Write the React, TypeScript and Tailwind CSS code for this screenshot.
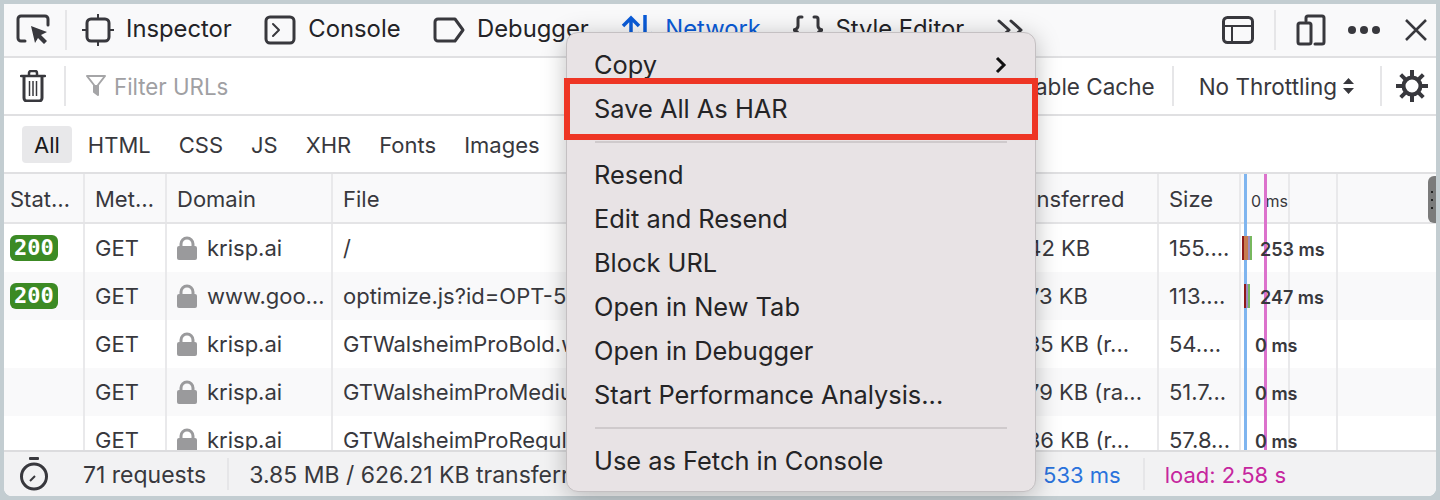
import React from "react";

const Tool = ({ icon, label, active }: { icon: React.ReactNode; label: string; active?: boolean }) => (
  <div className={`flex items-center gap-3 ${active ? "text-[#0a5bd8]" : "text-[#232327]"}`}>
    {icon}
    <span className="pb-0.5">{label}</span>
  </div>
);

const Sep = ({ className }: { className: string }) => <div className={`w-0.5 bg-[#e6e6e8] shrink-0 ${className}`} />;

const stroke = { fill: "none", stroke: "currentColor", strokeWidth: 3, strokeLinecap: "round" as const, strokeLinejoin: "round" as const };

const PickIcon = () => (
  <svg width="34" height="32" viewBox="0 0 34 32" className="text-[#38383d]">
    <path d="M9 27H5a3 3 0 0 1-3-3V5a3 3 0 0 1 3-3h24a3 3 0 0 1 3 3v6" {...stroke} />
    <path d="M15 12l16 6-6 3 6 6-3 3-6-6-3 5z" fill="currentColor" />
  </svg>
);
const InspectorIcon = () => (
  <svg width="32" height="32" viewBox="0 0 32 32" className="text-[#38383d]">
    <rect x="5" y="5" width="22" height="22" rx="4" {...stroke} />
    <path d="M16 0v5M16 27v5M0 16h5M27 16h5" fill="none" stroke="currentColor" strokeWidth="2" />
  </svg>
);
const ConsoleIcon = () => (
  <svg width="32" height="30" viewBox="0 0 32 30" className="text-[#38383d]">
    <rect x="2" y="2" width="28" height="26" rx="4" {...stroke} />
    <path d="M9 9l6 6-6 6" {...stroke} strokeWidth="2" />
  </svg>
);
const DebuggerIcon = () => (
  <svg width="32" height="26" viewBox="0 0 32 26" className="text-[#38383d]">
    <path d="M5 2h17l8 11-8 11H5a3 3 0 0 1-3-3V5a3 3 0 0 1 3-3z" {...stroke} />
  </svg>
);
const NetworkIcon = () => (
  <svg width="32" height="30" viewBox="0 0 32 30">
    <path d="M10 28V3M2 11l8-8 8 8" fill="none" stroke="currentColor" strokeWidth="3.5" />
    <path d="M24 0v26M16 18l8 8 8-8" fill="none" stroke="currentColor" strokeWidth="3.5" />
  </svg>
);
const BracesIcon = () => (
  <svg width="30" height="30" viewBox="0 0 30 30" className="text-[#38383d]">
    <path d="M9 2H7a2 2 0 0 0-2 2v7c0 2-1 3-4 4 3 1 4 2 4 4v7a2 2 0 0 0 2 2h2M21 2h2a2 2 0 0 1 2 2v7c0 2 1 3 4 4-3 1-4 2-4 4v7a2 2 0 0 1-2 2h-2" {...stroke} />
  </svg>
);

const TrashIcon = () => (
  <svg width="26" height="32" viewBox="0 0 26 32" className="text-[#38383d]">
    <path d="M1 6h24M9 5V3a2 2 0 0 1 2-2h4a2 2 0 0 1 2 2v2" {...stroke} strokeWidth="2.5" />
    <path d="M4 7v21a3 3 0 0 0 3 3h12a3 3 0 0 0 3-3V7" {...stroke} />
    <path d="M9.5 11v15M13 11v15M16.5 11v15" fill="none" stroke="currentColor" strokeWidth="1.5" />
  </svg>
);
const GearIcon = () => (
  <svg width="32" height="32" viewBox="0 0 32 32" className="text-[#38383d]">
    <circle cx="16" cy="16" r="8.5" fill="none" stroke="currentColor" strokeWidth="4" />
    <path d="M16 0v6M16 26v6M0 16h6M26 16h6M4.7 4.7l4.5 4.5M22.8 22.8l4.5 4.5M27.3 4.7l-4.5 4.5M9.2 22.8l-4.5 4.5" fill="none" stroke="currentColor" strokeWidth="4" />
  </svg>
);
const LockIcon = () => (
  <svg width="20" height="24" viewBox="0 0 20 24" className="text-[#9a9a9c] shrink-0">
    <path d="M4 11V8a6 6 0 0 1 12 0v3" fill="none" stroke="currentColor" strokeWidth="3" />
    <rect x="0" y="10" width="20" height="14" rx="2" fill="currentColor" />
  </svg>
);

const rows = [
  { status: true, domain: "krisp.ai", file: "/", transferred: "11.42 KB", size: "155....", time: "253 ms" },
  { status: true, domain: "www.goo…", file: "optimize.js?id=OPT-5", transferred: "11.73 KB", size: "113....", time: "247 ms" },
  { status: false, domain: "krisp.ai", file: "GTWalsheimProBold.woff2", transferred: "11.35 KB (r...", size: "54....", time: "0 ms" },
  { status: false, domain: "krisp.ai", file: "GTWalsheimProMedium.woff2", transferred: "11.79 KB (ra...", size: "51.7...", time: "0 ms" },
  { status: false, domain: "krisp.ai", file: "GTWalsheimProRegular.woff2", transferred: "11.86 KB (r...", size: "57.8...", time: "0 ms" },
];

const cols = "grid grid-cols-[81px_82px_166px_660px_166px_82px_49px_48px_1fr]";
const cell = "border-r-2 border-[#e9e9eb] flex items-center overflow-hidden whitespace-nowrap";
const padded = `${cell} pl-[10px]`;

const menuItem = "h-11 flex items-center justify-between pl-[27px] pr-7";

export default function App() {
  return (
    <div className="relative w-[1440px] h-[500px] bg-[#c3cdd1] p-1 overflow-hidden font-['Inter',sans-serif] text-[#38383d] text-[22px]">
      <div className="flex flex-col h-full bg-white rounded-b-lg overflow-hidden">
        {/* tabs */}
        <div className="h-[54px] shrink-0 flex items-center bg-[#f9f9fa] border-b-2 border-[#e0e0e2] pl-3 pr-2 text-[23.8px]">
          <PickIcon />
          <Sep className="h-10 ml-[15px] mr-[15px]" />
          <div className="flex items-center gap-[32.5px]">
            <Tool icon={<InspectorIcon />} label="Inspector" />
            <Tool icon={<ConsoleIcon />} label="Console" />
            <Tool icon={<DebuggerIcon />} label="Debugger" />
            <Tool icon={<NetworkIcon />} label="Network" active />
            <Tool icon={<BracesIcon />} label="Style Editor" />
            <svg width="26" height="22" viewBox="0 0 26 22" className="text-[#38383d]">
              <path d="M2 2l10 9-10 9M14 2l10 9-10 9" {...stroke} />
            </svg>
          </div>
          <div className="ml-auto flex items-center">
            <svg width="32" height="28" viewBox="0 0 32 28" className="text-[#38383d]">
              <rect x="1.5" y="1.5" width="29" height="25" rx="4" {...stroke} />
              <path d="M2 10h28M10 10v17" fill="none" stroke="currentColor" strokeWidth="2" />
            </svg>
            <Sep className="h-10 ml-5 mr-5" />
            <svg width="30" height="32" viewBox="0 0 30 32" className="text-[#38383d]">
              <path d="M10 7V4a2 2 0 0 1 2-2h14a2 2 0 0 1 2 2v24a2 2 0 0 1-2 2h-7" {...stroke} />
              <rect x="2" y="9" width="13" height="21" rx="2" {...stroke} />
            </svg>
            <div className="flex gap-1 ml-[22px]">
              <div className="w-2 h-2 rounded-full bg-[#38383d]" />
              <div className="w-2 h-2 rounded-full bg-[#38383d]" />
              <div className="w-2 h-2 rounded-full bg-[#38383d]" />
            </div>
            <svg width="24" height="24" viewBox="0 0 24 24" className="text-[#38383d] ml-6">
              <path d="M2 2l20 20M22 2L2 22" fill="none" stroke="currentColor" strokeWidth="2.5" />
            </svg>
          </div>
        </div>

        {/* filter bar */}
        <div className="h-[58px] shrink-0 flex items-center border-b-2 border-[#e0e0e2] pl-4 pr-2">
          <TrashIcon />
          <Sep className="h-10 ml-[18px] mr-5" />
          <svg width="20" height="24" viewBox="0 0 20 24" className="text-[#a5a5a7]">
            <path d="M1 2h18l-7 9v10l-4-3v-7z" fill="none" stroke="currentColor" strokeWidth="2" strokeLinejoin="round" />
            <path d="M8 11h4v10l-4-3z" fill="currentColor" />
          </svg>
          <span className="ml-2 text-[#a0a0a3] text-[22.3px] pt-0.5">Filter URLs</span>
          <div className="ml-auto flex items-center text-[22.5px]">
            <span className="pt-0.5">Disable Cache</span>
            <Sep className="h-10 ml-[17px] mr-[25px]" />
            <span className="pt-0.5">No Throttling</span>
            <svg width="11" height="18" viewBox="0 0 11 18" className="ml-1.5">
              <path d="M5.5 1L11 7H0zM5.5 17L0 11h11z" fill="currentColor" />
            </svg>
            <Sep className="h-10 ml-[26px] mr-3.5" />
            <GearIcon />
          </div>
        </div>

        {/* type filters */}
        <div className="h-[58px] shrink-0 flex items-center gap-[28px] border-b-2 border-[#e0e0e2] pl-[18px]">
          <span className="bg-[#e8e8ea] rounded px-3 pt-[3px] pb-px text-[#18181a] -mr-3">All</span>
          <span className="pt-0.5">HTML</span>
          <span className="pt-0.5">CSS</span>
          <span className="pt-0.5">JS</span>
          <span className="pt-0.5">XHR</span>
          <span className="pt-0.5">Fonts</span>
          <span className="pt-0.5">Images</span>
        </div>

        {/* table */}
        <div className="relative flex-1 min-h-0 overflow-hidden">
          <div className={`${cols} h-[50px] bg-[#f9f9fa] border-b-2 border-[#e4e4e6]`}>
            <div className={`${cell} pl-[6px] pt-[3px]`}>Stat…</div>
            <div className={`${padded} pt-[3px]`}>Met…</div>
            <div className={`${padded} pt-[3px]`}>Domain</div>
            <div className={`${padded} pt-[3px]`}>File</div>
            <div className={`${padded} pt-[3px]`}>Transferred</div>
            <div className={`${padded} pt-[3px]`}>Size</div>
            <div className={`${padded} text-[16px] pt-[5px]`}>0 ms</div>
            <div className={cell} />
            <div />
          </div>
          {rows.map((row, i) => (
            <div key={i} className={`${cols} h-12 ${i % 2 === 1 ? "bg-[#f9f9fa]" : "bg-white"}`}>
              <div className={`${cell} pl-1.5`}>
                {row.status && (
                  <span className="bg-[#3c8a24] text-white rounded-md font-['DejaVu_Sans_Mono',monospace] font-bold text-[22px] leading-[26px] px-1">
                    200
                  </span>
                )}
              </div>
              <div className={padded}>GET</div>
              <div className={`${padded} gap-2.5`}>
                <LockIcon />
                {row.domain}
              </div>
              <div className={padded}>{row.file}</div>
              <div className={padded}>{row.transferred}</div>
              <div className={padded}>{row.size}</div>
              <div className={`${cell} overflow-visible relative z-10`}>
                {row.status && (
                  <div className={`flex h-6 shrink-0 ${i === 0 ? "ml-px" : "ml-[3px]"}`}>
                    <div className="w-0.5 bg-[#8f1a1a]" />
                    {i === 0 && <div className="w-1 bg-[#c77c50]" />}
                    <div className="w-0.5 bg-[#9c8cc0]" />
                    <div className="w-0.5 bg-[#77b85e]" />
                  </div>
                )}
                <span className={`text-[18px] font-semibold absolute pt-0.5 ${row.status ? "left-[19px]" : "left-[14px]"}`}>{row.time}</span>
              </div>
              <div className={cell} />
              <div />
            </div>
          ))}
          <div className="absolute left-[1240px] top-0 bottom-0 w-[3px] bg-[#7fb5ef]" />
          <div className="absolute left-[1260px] top-0 bottom-0 w-[3px] bg-[#dc72cc]" />
          <div className="absolute right-0 top-0.5 w-2 h-[47px] bg-[#7b7b7b] rounded-l-md flex flex-col items-center justify-center gap-1.5">
            <div className="w-0.5 h-0.5 bg-[#222]" />
            <div className="w-0.5 h-0.5 bg-[#222]" />
            <div className="w-0.5 h-0.5 bg-[#222]" />
          </div>
        </div>

        {/* status bar */}
        <div className="h-[46px] shrink-0 flex items-center border-t-2 border-[#dcdcde] bg-[#f2f2f3] pl-4 whitespace-nowrap">
          <svg width="28" height="34" viewBox="0 0 28 34" className="text-[#38383d]">
            <rect x="9" y="0" width="10" height="3" rx="1" fill="currentColor" />
            <circle cx="14" cy="19.5" r="12.5" fill="none" stroke="currentColor" strokeWidth="3" />
            <path d="M10 24l5-5" fill="none" stroke="currentColor" strokeWidth="2" />
          </svg>
          <span className="ml-[35px] text-[23px] pt-0.5">71 requests</span>
          <Sep className="h-8 ml-[21px] mr-5" />
          <span className="text-[23px] pt-0.5">3.85 MB / 626.21 KB transferred</span>
          <span className="ml-auto text-[#2a72dc] pt-0.5">533 ms</span>
          <Sep className="h-8 ml-[22px] mr-5" />
          <span className="text-[#c6269e] mr-[150px] pt-0.5">load: 2.58 s</span>
        </div>
      </div>

      {/* context menu */}
      <div className="absolute left-[566px] top-8 w-[470px] h-[460px] bg-[#e8e3e5] rounded-xl border border-[#c4c0c2] shadow-[0_4px_24px_rgba(0,0,0,0.25)] pt-[10px] text-[25.4px] text-[#242426]">
        <div className={menuItem}>
          <span>Copy</span>
          <svg width="12" height="18" viewBox="0 0 12 18">
            <path d="M2 2l7 7-7 7" fill="none" stroke="#111" strokeWidth="3" />
          </svg>
        </div>
        <div className={menuItem}>Save All As HAR</div>
        <div className="h-[22px] flex items-center mx-7">
          <div className="h-0.5 w-full bg-[#cfcacc]" />
        </div>
        <div className={menuItem}>Resend</div>
        <div className={menuItem}>Edit and Resend</div>
        <div className={menuItem}>Block URL</div>
        <div className={menuItem}>Open in New Tab</div>
        <div className={menuItem}>Open in Debugger</div>
        <div className={menuItem}>Start Performance Analysis...</div>
        <div className="h-[22px] flex items-center mx-7">
          <div className="h-0.5 w-full bg-[#cfcacc]" />
        </div>
        <div className={menuItem}>Use as Fetch in Console</div>
        <div className="absolute -left-[3px] top-[45px] w-[474px] h-[62px] border-[6px] border-[#ee3524]" />
      </div>
    </div>
  );
}
